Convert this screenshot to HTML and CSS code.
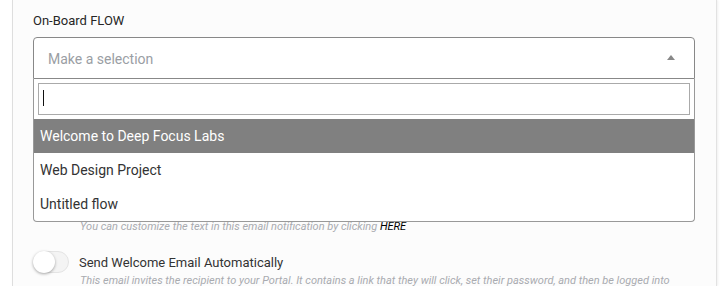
FILE: index.html
```html
<!DOCTYPE html>
<html lang="en">
<head>
    <meta charset="UTF-8">
    <meta name="viewport" content="width=device-width, initial-scale=1.0">
    <title>On-Board Flow</title>
    <link rel="stylesheet" href="styles.css">
</head>
<body>
    <div class="panel">
        <label class="field-label">On-Board FLOW</label>
        <div class="select open">
            <div class="select-value">
                <span class="placeholder">Make a selection</span>
                <span class="arrow"></span>
            </div>
            <div class="dropdown">
                <div class="search"><input type="text" class="search-input"><span class="caret"></span></div>
                <ul class="options">
                    <li class="option active">Welcome to Deep Focus Labs</li>
                    <li class="option">Web Design Project</li>
                    <li class="option">Untitled flow</li>
                </ul>
            </div>
        </div>

        <p class="hint first">You can customize the text in this email notification by clicking <a class="here">HERE</a></p>

        <div class="toggle-row">
            <span class="toggle"><span class="knob"></span></span>
            <span class="toggle-label">Send Welcome Email Automatically</span>
        </div>
        <p class="hint">This email invites the recipient to your Portal. It contains a link that they will click, set their password, and then be logged into</p>
    </div>
</body>
</html>
```

FILE: styles.css
```css
html, body {
    margin: 0;
    height: 100%;
    overflow: hidden;
    background: #fff;
}
body {
    font-family: Roboto, "Liberation Sans", Arial, sans-serif;
    color: #333;
}
.panel {
    margin: 0 11px 0 12px;
    height: 286px;
    box-sizing: border-box;
    border-left: 1px solid #dedede;
    border-right: 1px solid #e2e2e2;
    box-shadow: 1px 0 2px #f0f0f0;
    background: #fcfcfc;
    padding: 13px 21px 0 20px;
}
.field-label {
    display: block;
    font-size: 13px;
    line-height: 16px;
    margin-bottom: 8px;
    color: #262626;
}
.select {
    position: relative;
}
.select-value {
    height: 40px;
    border: 1px solid #888;
    border-radius: 4px 4px 0 0;
    background: #fff;
    display: flex;
    align-items: center;
    justify-content: space-between;
    padding: 0 19px 0 14px;
}
.placeholder {
    font-size: 14px;
    color: #9a9ea4;
    margin-top: 2px;
}
.arrow {
    width: 0;
    height: 0;
    border-left: 4px solid transparent;
    border-right: 4px solid transparent;
    border-bottom: 5px solid #888;
    margin-top: -1px;
}
.dropdown {
    position: absolute;
    top: 42px;
    left: 0;
    right: 0;
    z-index: 5;
    background: #fff;
    border: 1px solid #999;
    border-top: none;
    border-radius: 0 0 4px 4px;
}
.search {
    position: relative;
    padding: 4px;
}
.search-input {
    display: block;
    width: 100%;
    height: 32px;
    box-sizing: border-box;
    border: 1px solid #aaa;
    outline: none;
    margin: 0;
}
.caret {
    position: absolute;
    left: 9px;
    top: 11px;
    width: 1px;
    height: 16px;
    background: #111;
}
.options {
    list-style: none;
    margin: 0;
    padding: 0;
}
.option {
    height: 34px;
    line-height: 34px;
    padding: 0 6px;
    font-size: 14px;
    color: #333;
}
.option.active {
    background: #808080;
    color: #fff;
}
.toggle-row {
    display: flex;
    align-items: center;
    height: 22px;
}
.toggle {
    position: relative;
    width: 34px;
    height: 20px;
    border: 1px solid #e4e4e4;
    border-radius: 11px;
    background: #f4f4f4;
    margin-right: 10px;
}
.knob {
    position: absolute;
    left: -1px;
    top: -1px;
    width: 22px;
    height: 22px;
    border-radius: 50%;
    background: #fff;
    box-shadow: 0 1px 3px rgba(0, 0, 0, 0.35);
}
.toggle-label {
    font-size: 13px;
    color: #333;
}
.hint {
    margin: 2px 0 0 47px;
    font-size: 11px;
    line-height: 12px;
    font-style: italic;
    color: #a9abb0;
    white-space: nowrap;
}
.hint.first {
    margin-top: 142px;
}
.here {
    color: #000;
}
.hint + .toggle-row {
    margin-top: 18px;
}
```
